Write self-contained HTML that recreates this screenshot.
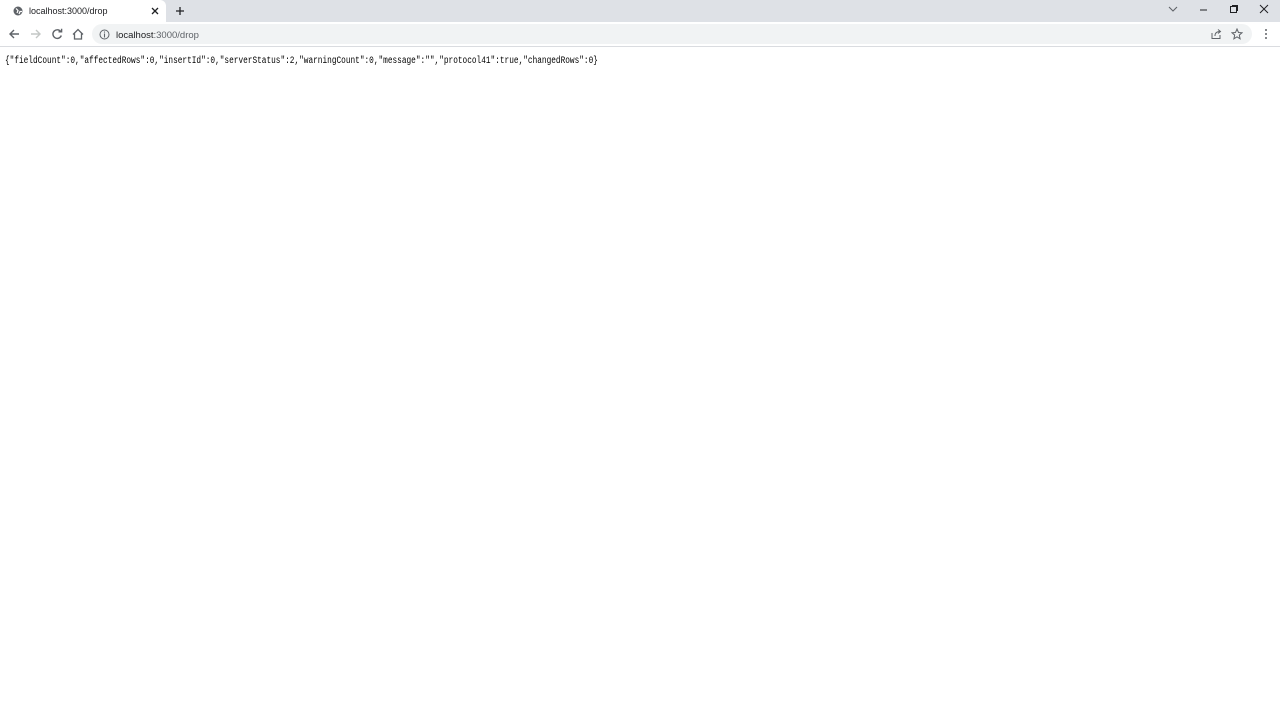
<!DOCTYPE html>
<html><head><style>
body{margin:0;width:1280px;height:720px;background:#fff;font-family:"Liberation Sans",sans-serif;overflow:hidden;position:relative}
.tabs{position:absolute;top:0;left:0;width:1280px;height:22px;background:#dee1e6}
.tab{position:absolute;left:0;top:0;width:166px;height:22px;background:#fff;border-radius:0 6px 0 0}
.tb{position:absolute;top:22px;left:0;width:1280px;height:24px;background:#fff;border-bottom:1px solid #dadce0}
.omni{position:absolute;left:92px;top:24px;width:1160px;height:20px;background:#f1f3f4;border-radius:10px}
.t{position:absolute;font-size:9px;color:#3c4043}
pre{position:absolute;left:5px;top:56px;margin:0;font-family:"Liberation Mono",monospace;font-size:10px;color:#000;transform:scaleX(0.778);transform-origin:0 0}
svg{position:absolute}
</style></head><body>
<div class="tabs"></div>
<div class="tab"></div>
<svg style="left:13px;top:6px" width="10" height="10" viewBox="0 0 10 10"><circle cx="5" cy="5" r="4.5" fill="#5f6368"/><path d="M3 2.5l2 2-1 2.5M6 8l1-2.5 2 0" stroke="#fff" stroke-width="1.2" fill="none"/></svg>
<div class="t" style="left:29px;top:6px;color:#202124">localhost:3000/drop</div>
<svg style="left:151px;top:7px" width="8" height="8"><path d="M1 1L7 7M7 1L1 7" stroke="#202124" stroke-width="1.3"/></svg>
<svg style="left:175px;top:6px" width="10" height="10"><path d="M5 1V9M1 5H9" stroke="#202124" stroke-width="1.3"/></svg>
<svg style="left:1168px;top:5px" width="10" height="8"><path d="M1 2L5 6 9 2" stroke="#5f6368" fill="none" stroke-width="1.1"/></svg>
<svg style="left:1199px;top:5px" width="10" height="10"><path d="M1 5H8" stroke="#202124" stroke-width="1"/></svg>
<svg style="left:1229px;top:4px" width="10" height="10"><rect x="1.5" y="2.5" width="6" height="6" fill="none" stroke="#202124"/><path d="M3 1.5H8.5V7" fill="none" stroke="#202124"/></svg>
<svg style="left:1259px;top:4px" width="10" height="10"><path d="M1 1L9 9M9 1L1 9" stroke="#202124" stroke-width="1"/></svg>
<div class="tb"></div>
<svg style="left:8px;top:28px" width="12" height="12"><path d="M11 6H2M6 2L2 6 6 10" stroke="#5f6368" fill="none" stroke-width="1.4"/></svg>
<svg style="left:30px;top:28px" width="12" height="12"><path d="M1 6H10M6 2L10 6 6 10" stroke="#c4c7c5" fill="none" stroke-width="1.4"/></svg>
<svg style="left:51px;top:28px" width="12" height="12"><path d="M10 4A4.3 4.3 0 1 0 10.3 7.5" stroke="#5f6368" fill="none" stroke-width="1.4"/><path d="M7.5 3.8H10.6V0.8" stroke="#5f6368" fill="none" stroke-width="1.4"/></svg>
<svg style="left:72px;top:28px" width="12" height="12"><path d="M1 6.5L6 1.5 11 6.5M2.5 5.5V11H9.5V5.5" stroke="#5f6368" fill="none" stroke-width="1.3"/></svg>
<div class="omni"></div>
<svg style="left:99px;top:29px" width="11" height="11"><circle cx="5.5" cy="5.5" r="4.5" fill="none" stroke="#5f6368" stroke-width="1"/><path d="M5.5 4.5V8.5M5.5 2.5V3.6" stroke="#5f6368" stroke-width="1.1"/></svg>
<div class="t" style="left:116px;top:30px;font-size:9.5px;color:#202124">localhost<span style="color:#5f6368">:3000/drop</span></div>
<svg style="left:1210px;top:28px" width="12" height="12"><path d="M2 5V10.5H10V7M5 8C5 5 7 3.5 10 3.5M8 1.5L10.5 3.5 8 5.5" stroke="#5f6368" fill="none" stroke-width="1"/></svg>
<svg style="left:1231px;top:28px" width="12" height="12"><path d="M6 1L7.5 4.5 11 4.8 8.3 7.1 9.1 10.8 6 8.8 2.9 10.8 3.7 7.1 1 4.8 4.5 4.5Z" stroke="#5f6368" fill="none" stroke-width="1"/></svg>
<svg style="left:1263px;top:28px" width="6" height="12"><circle cx="3" cy="2" r="1" fill="#5f6368"/><circle cx="3" cy="6" r="1" fill="#5f6368"/><circle cx="3" cy="10" r="1" fill="#5f6368"/></svg>
<pre>{"fieldCount":0,"affectedRows":0,"insertId":0,"serverStatus":2,"warningCount":0,"message":"","protocol41":true,"changedRows":0}</pre>
</body></html>
